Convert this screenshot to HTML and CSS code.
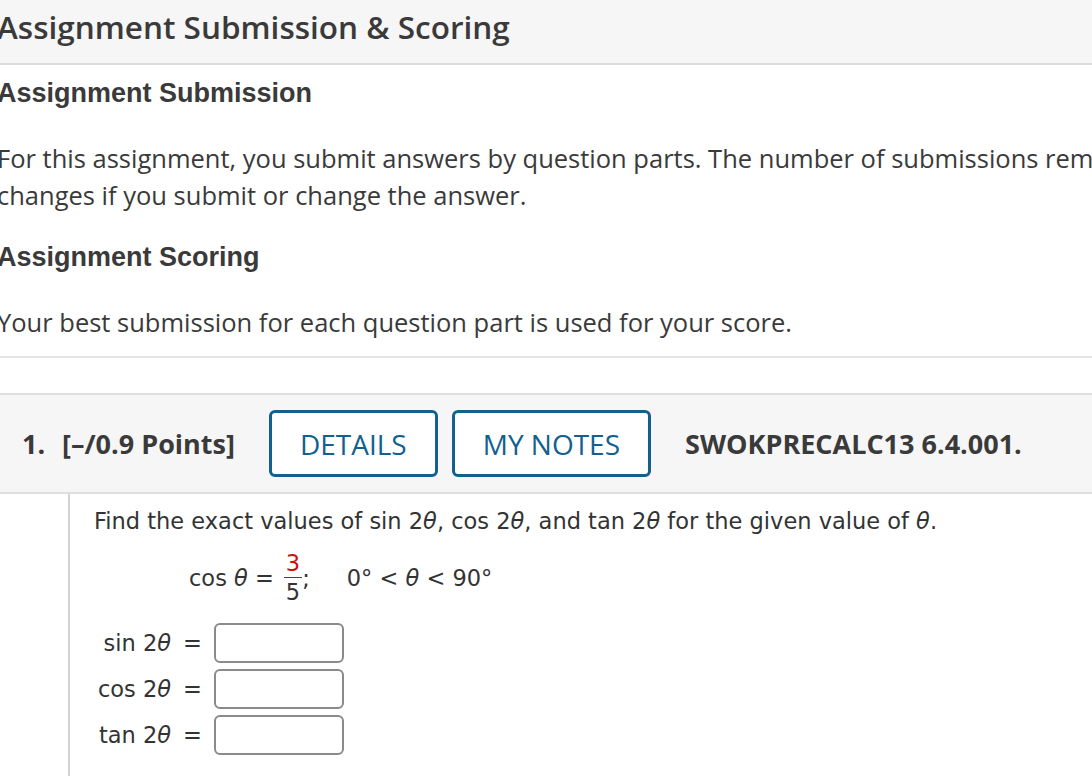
FILE: index.html
```html
<!DOCTYPE html>
<html>
<head>
<meta charset="utf-8">
<link rel="stylesheet" href="styles.css">
</head>
<body>
<div class="page">
  <header class="top">
    <h1 class="title">Assignment Submission &amp; Scoring</h1>
  </header>
  <section class="info">
    <h2 class="sub">Assignment Submission</h2>
    <p class="text">For this assignment, you submit answers by question parts. The number of submissions remaining for each question part only changes if you submit or change the answer.</p>
    <h2 class="sub">Assignment Scoring</h2>
    <p class="text text-last">Your best submission for each question part is used for your score.</p>
  </section>
  <div class="rule"></div>
  <div class="qhead">
    <span class="qnum">1.</span>
    <span class="qpts">[–/0.9 Points]</span>
    <button class="btn btn-details">DETAILS</button>
    <button class="btn btn-notes">MY NOTES</button>
    <span class="qcode">SWOKPRECALC13 6.4.001.</span>
  </div>
  <div class="qbody">
    <p class="prompt">Find the exact values of sin 2<i>θ</i>, cos 2<i>θ</i>, and tan 2<i>θ</i> for the given value of <i>θ</i>.</p>
    <div class="given">
      <span>cos <i>θ</i> =</span>
      <span class="frac"><span class="num">3</span><span class="den">5</span></span>
      <span class="semi">;</span>
      <span class="range">0° &lt; <i>θ</i> &lt; 90°</span>
    </div>
    <div class="answers">
      <div class="arow"><span class="alabel">sin 2<i>θ</i></span><span class="eq">=</span><span class="abox"></span></div>
      <div class="arow"><span class="alabel">cos 2<i>θ</i></span><span class="eq">=</span><span class="abox"></span></div>
      <div class="arow"><span class="alabel">tan 2<i>θ</i></span><span class="eq">=</span><span class="abox"></span></div>
    </div>
  </div>
</div>
</body>
</html>
```
FILE: styles.css
```css
html, body {
  margin: 0;
  padding: 0;
  background: #fff;
  overflow: hidden;
}
.page {
  width: 1560px;
  margin-left: -3px;
  color: #333;
  font-family: "Open Sans", "Liberation Sans", sans-serif;
}
.top {
  height: 63px;
  background: #f6f6f6;
  border-bottom: 2px solid #dcdcdc;
  display: flex;
  align-items: center;
}
.title {
  margin: 0;
  padding-bottom: 10px;
  font-size: 31.5px;
  font-weight: 600;
  color: #3a3a3a;
  line-height: 40px;
}
.info {
  padding-top: 8px;
}
.sub {
  margin: 0;
  font-family: "Liberation Sans", Arial, sans-serif;
  font-weight: bold;
  font-size: 27px;
  line-height: 40px;
  color: #3a3a3a;
}
.text {
  margin: 27px 0 23px;
  font-size: 25.5px;
  line-height: 37px;
  color: #3a3a3a;
}
.text-last {
  margin-bottom: 15px;
}
.rule {
  width: 1100px;
  height: 2px;
  background: #e4e4e4;
}
.qhead {
  margin-top: 35px;
  height: 97px;
  border-top: 2px solid #dedede;
  border-bottom: 2px solid #dedede;
  background: #f6f6f6;
  display: flex;
  align-items: center;
  padding-left: 25px;
  font-size: 27px;
}
.qnum {
  font-weight: 700;
  color: #3a3a3a;
  width: 40px;
}
.qpts {
  font-weight: 700;
  color: #3a3a3a;
  margin-right: 34px;
}
.btn {
  height: 67px;
  border: 3px solid #135f8f;
  border-radius: 6px;
  background: #fff;
  color: #135f8f;
  font-family: "Open Sans", sans-serif;
  font-size: 28px;
  padding: 0 28px;
  margin-right: 14px;
}
.btn-notes {
  margin-right: 34px;
}
.qcode {
  font-weight: 700;
  color: #3a3a3a;
}
.qbody {
  margin-left: 71px;
  border-left: 2px solid #d2d2d2;
  padding: 12px 0 20px 24px;
  font-family: "DejaVu Sans", Verdana, sans-serif;
  font-size: 22.5px;
  color: #333;
}
.prompt {
  margin: 0;
  line-height: 30px;
}
.given {
  display: flex;
  align-items: center;
  margin: 10px 0 0 95px;
  height: 64px;
}
.frac {
  display: inline-flex;
  flex-direction: column;
  align-items: center;
  margin-left: 10px;
  font-size: 22.5px;
  line-height: 23px;
}
.num {
  color: #cc1111;
  border-bottom: 1.5px solid #444;
  padding: 0 2px 2px;
}
.den {
  padding-top: 3px;
}
.semi {
  margin-right: 37px;
}
.answers {
  margin-top: 10px;
}
.arow {
  display: flex;
  align-items: center;
  height: 46px;
}
.alabel {
  width: 77px;
  text-align: right;
}
.eq {
  width: 43px;
  text-align: center;
}
.abox {
  width: 126px;
  height: 36px;
  border: 2px solid #8a8a8a;
  border-radius: 6px;
  background: #fff;
}
```
